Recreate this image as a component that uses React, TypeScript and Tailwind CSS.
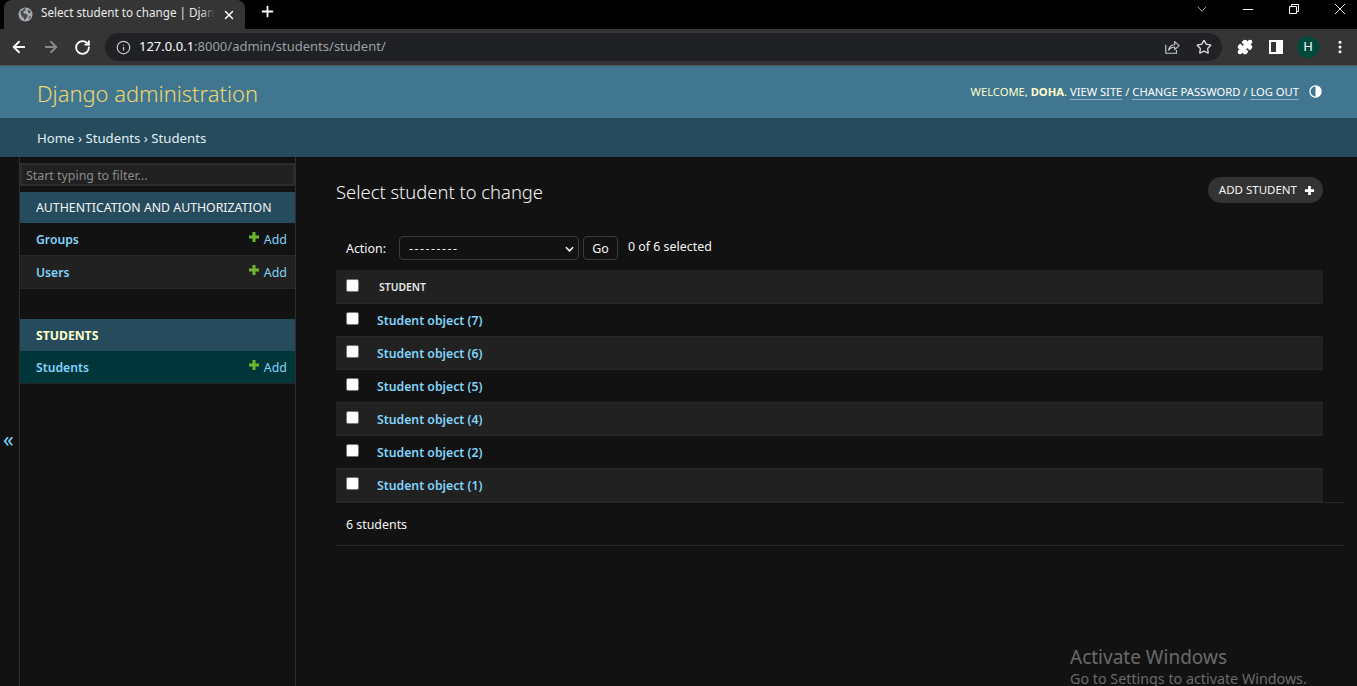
import { ArrowLeft, ArrowRight, RotateCw, Info, Star, Puzzle, EllipsisVertical, Plus, X } from 'lucide-react';

const PlusIcon = ({ className }: { className: string }) => (
  <svg viewBox="0 0 12 12" className={className} fill="currentColor">
    <path d="M4.5 1h3v3.5H11v3H7.5V11h-3V7.5H1v-3h3.5z" />
  </svg>
);

const ChromeBar = () => (
  <div className="w-full">
    <div className="flex h-[29px] bg-black">
      <div className="ml-[4px] flex h-[29px] w-[241px] items-center rounded-t-lg bg-[#353535] pl-[14px] pr-[9px]">
        <svg viewBox="0 0 16 16" className="h-[15px] w-[15px] shrink-0">
          <circle cx="8" cy="8" r="7.5" fill="#a8abb0" />
          <path d="M2.5 4.5c2-.5 3-1.5 4-3.5l2 1-1 2-2 1 1 2 3 .5 1 2-2 3-1.5 2-1-3-2-1.500-1-2.500zM11 2.500l3 3-2 1.500-1.500-2zM12 10l2-1-1 3-1.500 1z" fill="#4c4d50" />
        </svg>
        <div className="relative mb-[3px] ml-[8px] w-[174px] overflow-hidden whitespace-nowrap text-[11.7px] text-[#e8eaed]">
          Select student to change | Django
          <div className="absolute right-0 top-0 h-full w-[14px] bg-gradient-to-r from-transparent to-[#353535]" />
        </div>
        <X size={14} strokeWidth={2.5} className="ml-auto text-white" />
      </div>
      <Plus size={17} strokeWidth={2.5} className="ml-[14px] mt-[3px] text-white" />
      <div className="ml-auto flex h-[18px] items-center">
        <svg viewBox="0 0 12 8" className="h-[6px] w-[10px] text-white" fill="none" stroke="currentColor" strokeWidth="0.9">
          <path d="M0.5 1l5.5 6 5.5-6" />
        </svg>
        <div className="ml-[36px] h-px w-[10px] bg-white" />
        <svg viewBox="0 0 10 10" className="ml-[36px] h-[10px] w-[10px] text-white" fill="none" stroke="currentColor" strokeWidth="1">
          <path d="M0.5 2.500h7v7h-7zM2.500 2.500v-2h7v7h-2" />
        </svg>
        <svg viewBox="0 0 10 10" className="ml-[36px] mr-[12px] h-[10px] w-[10px] text-white" fill="none" stroke="currentColor" strokeWidth="0.9">
          <path d="M0 0l10 10M10 0L0 10" />
        </svg>
      </div>
    </div>
    <div className="flex h-[36px] items-center bg-[#353535]">
      <ArrowLeft size={18} strokeWidth={2.4} className="ml-[10px] text-white" />
      <ArrowRight size={18} strokeWidth={2.4} className="ml-[14px] text-[#8a8a8a]" />
      <RotateCw size={17} strokeWidth={2.6} className="ml-[14px] text-white" />
      <div className="ml-[14px] flex h-[28px] w-[1117px] items-center rounded-full bg-[#202124] pl-[11px] pr-[10px]">
        <Info size={15} className="text-[#c4c7c5]" />
        <span className="ml-[8px] text-[13px] text-[#9aa0a6]">
          <span className="text-white">127.0.0.1</span>:8000/admin/students/student/
        </span>
        <svg viewBox="0 0 18 18" className="ml-auto h-[16px] w-[16px] text-[#c4c7c5]" fill="none" stroke="currentColor" strokeWidth="1.300">
          <path d="M2 6.500V16h12v-3.500" />
          <path d="M5 12.500C6 8.500 9 6.500 12 6.500V3l5 4.500-5 4.500V9c-3 0-5 1.200-7 3.500z" strokeLinejoin="round" />
        </svg>
        <Star size={16} strokeWidth={2} className="ml-[16px] text-[#dcdcdc]" />
      </div>
      <Puzzle size={16} fill="white" className="ml-[15px] text-white" />
      <div className="ml-[16px] flex h-[14px] w-[14px] justify-end border-[2px] border-white">
        <div className="h-full w-[5px] bg-white" />
      </div>
      <div className="ml-[14px] flex h-[22px] w-[22px] items-center justify-center rounded-full bg-[#01493b] text-[13px] text-white">H</div>
      <EllipsisVertical size={16} strokeWidth={2.6} className="ml-[13px] text-white" />
    </div>
  </div>
);

const SiteHeader = () => (
  <>
    <div className="flex h-[53px] items-center justify-between border-t border-[#555] bg-[#417690] pl-[37px] pr-[35px]">
      <div className="pt-[4px] text-[21.9px] font-light text-[#ecd66f]">Django administration</div>
      <div className="flex items-center text-[11.2px] uppercase text-[#ffffcc]">
        <span>
          Welcome, <strong className="font-bold">Doha</strong>.{' '}
          <a className="border-b border-[#8fb0c0] text-white">View site</a> / <a className="border-b border-[#8fb0c0] text-white">Change password</a> /{' '}
          <a className="border-b border-[#8fb0c0] text-white">Log out</a>
        </span>
        <svg viewBox="0 0 14 14" className="ml-[10px] h-[13px] w-[13px]">
          <circle cx="7" cy="7" r="6" fill="none" stroke="white" strokeWidth="1.4" />
          <path d="M7 1a6 6 0 0 1 0 12z" fill="white" />
        </svg>
      </div>
    </div>
    <div className="flex h-[39px] items-center bg-[#264b5d] pl-[37px] pt-[2px] text-[13.2px] text-[#e0eef5]">Home › Students › Students</div>
  </>
);

const NavRow = ({ name, bg }: { name: string; bg: string }) => (
  <div className={`flex h-[33px] items-center justify-between border-b border-[#272727] pl-[16px] pr-[8px] pt-[2px] text-[12.4px] ${bg}`}>
    <span className="text-[12.2px] font-semibold text-[#81d4fa]">{name}</span>
    <span className="flex items-center text-[#81d4fa]">
      <PlusIcon className="mb-[5px] mr-[4px] h-[12px] w-[12px] text-[#6db52c]" />
      Add
    </span>
  </div>
);

const Sidebar = () => (
  <div className="flex w-[296px] shrink-0">
    <div className="flex w-[20px] shrink-0 items-center border-r border-[#2f2f2f] pl-[3px] pt-[37px] text-[21px] text-[#81d4fa]">«</div>
    <div className="w-[276px] border-r border-[#2f2f2f]">
      <div className="mt-[6px] flex h-[23px] items-center border-2 border-[#2c2c2c] bg-[#212121] pl-[4px] pt-[3px] text-[12.4px] text-[#8a8a8a]">
        Start typing to filter...
      </div>
      <div className="mt-[6px] flex h-[31px] items-center bg-[#264b5d] pl-[16px] pt-[2px] text-[12.3px] text-[#f5f5f5]">AUTHENTICATION AND AUTHORIZATION</div>
      <NavRow name="Groups" bg="bg-[#121212]" />
      <NavRow name="Users" bg="bg-[#212121]" />
      <div className="mt-[30px] flex h-[32px] items-center bg-[#264b5d] pl-[16px] pt-[2px] text-[12.2px] font-bold text-[#ffffcc]">STUDENTS</div>
      <NavRow name="Students" bg="bg-[#00363a]" />
    </div>
  </div>
);

const students = [7, 6, 5, 4, 2, 1];

const Checkbox = () => <div className="h-[13px] w-[13px] rounded-[2px] border border-[#767676] bg-white" />;

const Main = () => (
  <div className="flex-1 pl-[40px] pr-[14px] text-[#f5f5f5]">
    <div className="mr-[20px] mt-[20px] flex h-[26px] items-center justify-between">
      <h1 className="pt-[4px] text-[18.4px] font-light text-[#f5f5f5]">Select student to change</h1>
      <a className="flex h-[26px] items-center rounded-full bg-[#333] pl-[11px] pr-[8px] text-[11.5px] text-[#f5f5f5]">
        ADD STUDENT
        <PlusIcon className="ml-[7px] h-[11px] w-[11px] text-white" />
      </a>
    </div>
    <div className="mt-[32px] flex h-[25px] items-center pl-[10px] text-[12.4px]">
      <span className="pt-[4px]">Action:</span>
      <div className="relative ml-[13px] flex h-[24px] w-[180px] items-center rounded-[4px] border border-[#3a3a3a] bg-[#121212] pl-[9px] pt-[3px] tracking-[1.5px]">
        ---------
        <svg viewBox="0 0 10 6" className="absolute right-[4px] top-[9px] h-[6px] w-[9px]" fill="none" stroke="white" strokeWidth="1.8">
          <path d="M1 1l4 4 4-4" />
        </svg>
      </div>
      <div className="ml-[4px] flex h-[24px] w-[35px] items-center justify-center rounded-[4px] border border-[#3a3a3a] pt-[3px]">Go</div>
      <span className="mb-[1px] ml-[10px]">0 of 6 selected</span>
    </div>
    <div className="mr-[20px] mt-[10px]">
      <div className="flex h-[34px] items-center border-b border-[#272727] bg-[#212121] pl-[10px]">
        <div className="mb-[3px]"><Checkbox /></div>
        <span className="ml-[20px] pt-[2px] text-[10.4px] font-semibold text-[#e8e8e8]">STUDENT</span>
      </div>
      {students.map((n, i) => (
        <div key={n} className={`flex h-[33px] items-center border-b border-[#272727] pl-[10px] ${i % 2 ? 'bg-[#212121]' : 'bg-[#121212]'}`}>
          <div className="mb-[4px]"><Checkbox /></div>
          <span className="ml-[18px] pt-[2px] text-[12.25px] font-semibold text-[#81d4fa]">Student object ({n})</span>
        </div>
      ))}
    </div>
    <div className="flex h-[44px] items-center border-y border-[#272727] pl-[10px] pt-[2px] text-[12.4px]">6 students</div>
  </div>
);

export default function App() {
  return (
    <div className="relative h-[686px] w-[1357px] overflow-hidden bg-[#121212] font-['Noto_Sans','Open_Sans',sans-serif]">
      <ChromeBar />
      <SiteHeader />
      <div className="flex h-[529px]">
        <Sidebar />
        <Main />
      </div>
      <div className="absolute left-[1070px] top-[644px] text-[#6a6a6a]">
        <div className="text-[19px] leading-[26px]">Activate Windows</div>
        <div className="whitespace-nowrap text-[14.3px] leading-[18px]">Go to Settings to activate Windows.</div>
      </div>
    </div>
  );
}
